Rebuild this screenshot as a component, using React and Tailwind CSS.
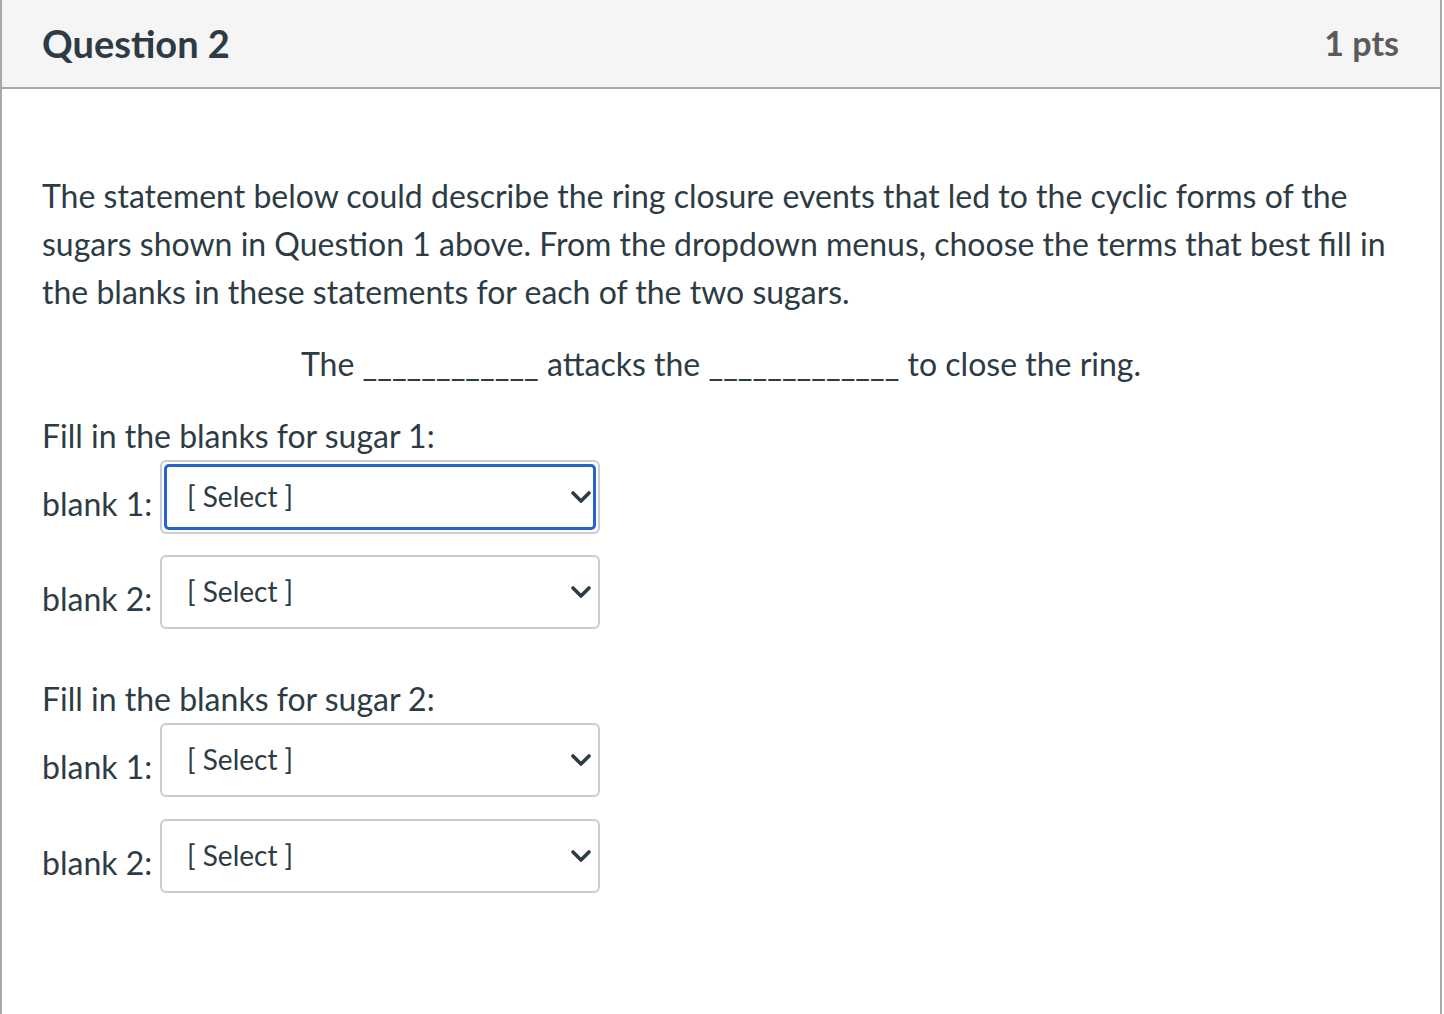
import React from 'react';

const Chevron = () => (
  <svg width="22" height="14" viewBox="0 0 22 14" className="shrink-0">
    <polyline
      points="3,3 11,11 19,3"
      fill="none"
      stroke="#2d3b45"
      strokeWidth="3.6"
      strokeLinecap="round"
      strokeLinejoin="round"
    />
  </svg>
);

const SelectBox = ({ focused }) => (
  <div className="w-[440px] h-[74px] rounded-[6px] border-2 border-[#c9cdd1] bg-white p-[2px]">
    <div
      className={
        focused
          ? 'h-full w-full rounded-[5px] border-[3px] border-[#2463c9] flex items-center justify-between pl-[20px] pr-[1px]'
          : 'h-full w-full rounded-[5px] border-[3px] border-transparent flex items-center justify-between pl-[20px] pr-[1px]'
      }
    >
      <span className="text-[28px] leading-none text-[#2d3b45] -mt-[3px]">[ Select ]</span>
      <Chevron />
    </div>
  </div>
);

const BlankRow = ({ label, focused }) => (
  <div className="flex items-start">
    <span className="w-[118px] pt-[20px] text-[32px] leading-[48px]">{label}</span>
    <SelectBox focused={focused} />
  </div>
);

export default function App() {
  return (
    <div
      className="w-[1444px] h-[1014px] bg-white overflow-hidden text-[#2d3b45]"
      style={{ fontFamily: 'Lato, "Open Sans", sans-serif' }}
    >
      <div className="w-[1442px] h-[1014px] border-x-2 border-[#a8a8a8]">
        <div className="h-[89px] bg-[#f5f5f5] border-b-2 border-[#a8a8a8] flex items-center justify-between pl-[40px] pr-[41px]">
          <h2 className="text-[38px] font-bold leading-none -mt-[2px]">Question 2</h2>
          <span className="text-[34px] font-bold leading-none text-[#5b5b5b] -mt-[2px]">1 pts</span>
        </div>
        <div className="px-[40px] pt-[83px]">
          <p className="text-[32px] leading-[48px]">
            The statement below could describe the ring closure events that led to the cyclic forms of the
            sugars shown in Question 1 above. From the dropdown menus, choose the terms that best fill in
            the blanks in these statements for each of the two sugars.
          </p>
          <p className="mt-[24px] text-[32px] leading-[48px] text-center">
            The ____________ attacks the _____________ to close the ring.
          </p>
          <p className="mt-[24px] text-[32px] leading-[48px]">Fill in the blanks for sugar 1:</p>
          <div className="flex flex-col gap-[21px]">
            <BlankRow label="blank 1:" focused />
            <BlankRow label="blank 2:" />
          </div>
          <p className="mt-[46px] text-[32px] leading-[48px]">Fill in the blanks for sugar 2:</p>
          <div className="flex flex-col gap-[22px]">
            <BlankRow label="blank 1:" />
            <BlankRow label="blank 2:" />
          </div>
        </div>
      </div>
    </div>
  );
}
